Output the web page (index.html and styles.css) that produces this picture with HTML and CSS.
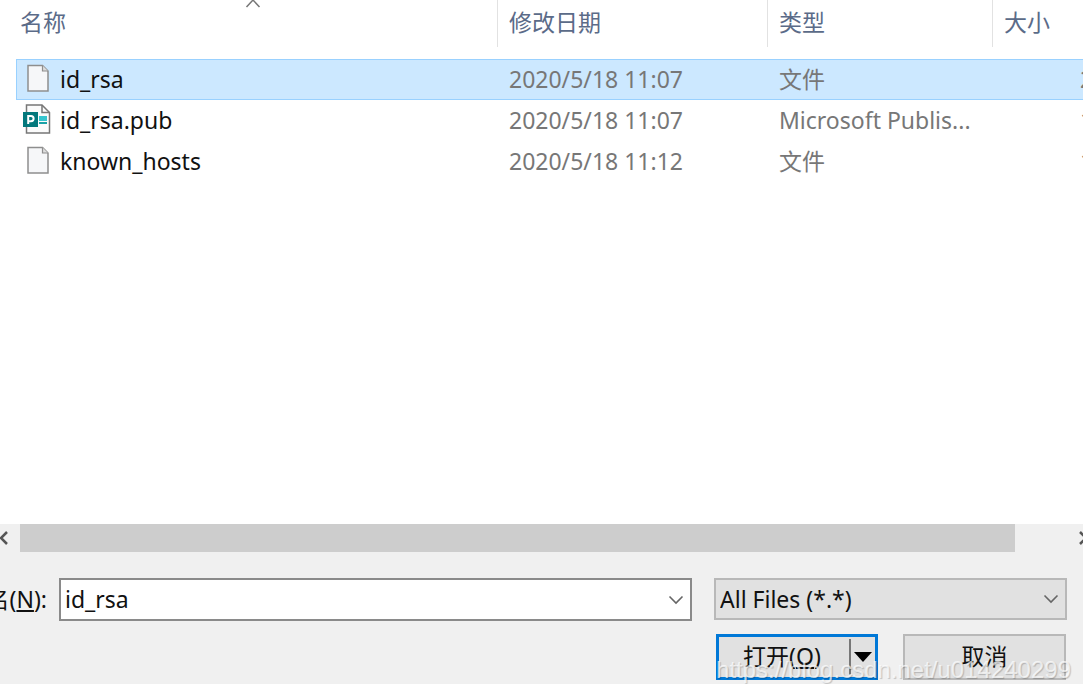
FILE: index.html
```html
<!DOCTYPE html>
<html lang="zh-CN">
<head>
    <meta charset="UTF-8">
    <meta name="viewport" content="width=device-width, initial-scale=1.0">
    <title>打开</title>
    <link rel="stylesheet" href="styles.css">
</head>
<body>
    <main class="files">
        <table class="file_table">
            <thead>
                <tr>
                    <th class="col_name">名称
                        <svg class="sort" width="16" height="9" viewBox="0 0 16 9"><path d="M1.5 8 L8 1 L14.5 8" fill="none" stroke="#777" stroke-width="1.5"/></svg>
                    </th>
                    <th class="col_date">修改日期</th>
                    <th class="col_type">类型</th>
                    <th class="col_size">大小</th>
                </tr>
            </thead>
            <tbody>
                <tr class="selected">
                    <td>
                        <div class="file_name">
                            <svg class="icon" width="30" height="32" viewBox="0 0 30 32">
                                <path d="M5 2.5 H19.5 L25 8 V28 H5 Z" fill="#f6f7f9" stroke="#8e8e8e" stroke-width="1.5"/>
                                <path d="M19.5 2.5 V8 H25" fill="#ddd" stroke="#8e8e8e" stroke-width="1.2"/>
                            </svg>
                            <span>id_rsa</span>
                        </div>
                    </td>
                    <td>2020/5/18 11:07</td>
                    <td>文件</td>
                    <td class="size">2 KB</td>
                </tr>
                <tr>
                    <td>
                        <div class="file_name">
                            <svg class="icon" width="30" height="32" viewBox="0 0 30 32">
                                <path d="M3.5 1 H19 L26.5 8.5 V29 H3.5 Z" fill="#fbfbfb" stroke="#777" stroke-width="1.5"/>
                                <path d="M19 1 V8.5 H26.5" fill="none" stroke="#777" stroke-width="1.5"/>
                                <rect x="16" y="12" width="8" height="5" fill="#36c5cf"/>
                                <rect x="16" y="18" width="8" height="2" fill="#1ba1a6"/>
                                <rect x="0" y="8" width="15" height="15" fill="#03787c"/>
                                <path d="M5.2 20 V12 H8 A2.6 2.6 0 0 1 8 17.2 H5.2" fill="none" stroke="#fff" stroke-width="2"/>
                            </svg>
                            <span>id_rsa.pub</span>
                        </div>
                    </td>
                    <td>2020/5/18 11:07</td>
                    <td>Microsoft Publis...</td>
                    <td class="size">1 KB</td>
                </tr>
                <tr>
                    <td>
                        <div class="file_name">
                            <svg class="icon" width="30" height="32" viewBox="0 0 30 32">
                                <path d="M5 2.5 H19.5 L25 8 V28 H5 Z" fill="#f6f7f9" stroke="#8e8e8e" stroke-width="1.5"/>
                                <path d="M19.5 2.5 V8 H25" fill="#ddd" stroke="#8e8e8e" stroke-width="1.2"/>
                            </svg>
                            <span>known_hosts</span>
                        </div>
                    </td>
                    <td>2020/5/18 11:12</td>
                    <td>文件</td>
                    <td class="size">1 KB</td>
                </tr>
            </tbody>
        </table>
    </main>

    <div class="scrollbar">
        <button class="scroll_btn" type="button" aria-label="向左滚动">
            <svg width="10" height="14" viewBox="0 0 10 14"><path d="M7 1 L1 7 L7 13" fill="none" stroke="#555" stroke-width="2.5"/></svg>
        </button>
        <div class="track"><div class="thumb"></div></div>
        <button class="scroll_btn right" type="button" aria-label="向右滚动">
            <svg width="10" height="14" viewBox="0 0 10 14"><path d="M2 1 L8 7 L2 13" fill="none" stroke="#555" stroke-width="2.5"/></svg>
        </button>
    </div>

    <form class="footer" onsubmit="return false">
        <div class="fields">
            <label class="name_label" for="fileName"><span>文件名(<u>N</u>):</span></label>
            <div class="combo">
                <input id="fileName" type="text" value="id_rsa" autocomplete="off">
                <button class="combo_btn" type="button" aria-label="以前的文件名">
                    <svg width="16" height="10" viewBox="0 0 16 10"><path d="M1.5 1.5 L8 8 L14.5 1.5" fill="none" stroke="#666" stroke-width="1.6"/></svg>
                </button>
            </div>
            <div class="filter">
                <select aria-label="文件类型">
                    <option>All Files (*.*)</option>
                </select>
                <svg width="16" height="10" viewBox="0 0 16 10"><path d="M1.5 1.5 L8 8 L14.5 1.5" fill="none" stroke="#666" stroke-width="1.6"/></svg>
            </div>
        </div>
        <div class="actions">
            <div class="split">
                <button class="open" type="submit">打开(<u>O</u>)</button>
                <button class="more" type="button" aria-label="打开方式">
                    <svg width="18" height="10" viewBox="0 0 18 10"><path d="M0 0 H18 L9 10 Z" fill="#000"/></svg>
                </button>
            </div>
            <button class="cancel" type="button">取消</button>
        </div>
        <div class="watermark">https://blog.csdn.net/u014240299</div>
    </form>
</body>
</html>
```

FILE: styles.css
```css
* {
    box-sizing: border-box;
    margin: 0;
    padding: 0;
}
body {
    display: flex;
    flex-direction: column;
    min-height: 100vh;
    overflow: hidden;
    background-color: #fff;
    color: #111;
    font-family: "Noto Sans", "Noto Sans CJK SC", sans-serif;
    font-size: 23px;
    line-height: 32px;
}
button, input, select {
    font: inherit;
    color: inherit;
    border: none;
    background: none;
}
u {
    text-decoration-thickness: 2px;
    text-underline-offset: 2px;
}

/* file list */
.files {
    flex: 1;
    padding-left: 16px;
    overflow: hidden;
}
.file_table {
    width: calc(100% + 60px);
    table-layout: fixed;
    border-collapse: separate;
    border-spacing: 0;
}
.file_table th {
    position: relative;
    height: 47px;
    padding-left: 11px;
    padding-bottom: 3px;
    border-right: 1px solid #e2e2e2;
    color: #5b6b88;
    font-weight: normal;
    text-align: left;
}
.file_table .col_name {
    padding-left: 4px;
}
.col_date {
    width: 270px;
}
.col_type {
    width: 225px;
}
.col_size {
    width: 150px;
}
.sort {
    position: absolute;
    top: -1px;
    left: 229px;
}
.file_table tbody::before {
    content: "";
    display: block;
    height: 12px;
}
.file_table td {
    height: 41px;
    padding-left: 11px;
    padding-bottom: 2px;
    border: 1px solid transparent;
    border-width: 1px 0;
    color: #777;
    white-space: nowrap;
}
.file_table td:first-child {
    border-left-width: 1px;
    padding-left: 6px;
    color: #111;
}
.file_table td.size {
    padding-left: 87px;
}
.selected td {
    background-color: #cce8ff;
    border-color: #99d1ff;
}
.file_name {
    display: flex;
    align-items: center;
    gap: 7px;
}
.icon {
    flex: none;
}

/* horizontal scrollbar */
.scrollbar {
    display: flex;
    height: 28px;
    overflow: hidden;
    background-color: #f0f0f0;
}
.scroll_btn {
    display: flex;
    align-items: center;
    width: 20px;
    flex: none;
}
.scroll_btn.right {
    width: 5px;
}
.scroll_btn svg {
    flex: none;
}
.track {
    flex: 1;
}
.thumb {
    width: 94%;
    height: 100%;
    background-color: #cdcdcd;
}

/* name, filter and buttons */
.footer {
    position: relative;
    padding: 26px 16px 4px 0;
    background-color: #f0f0f0;
}
.fields {
    display: flex;
    align-items: flex-start;
}
.name_label {
    display: flex;
    justify-content: flex-end;
    align-items: center;
    width: 47px;
    height: 42px;
    margin-right: 12px;
    overflow: hidden;
    white-space: nowrap;
}
.combo {
    display: flex;
    flex: 1;
    height: 43px;
    margin-right: 22px;
    border: 2px solid #8a8a8a;
    background-color: #fff;
}
.combo input {
    flex: 1;
    min-width: 0;
    padding-left: 4px;
    padding-bottom: 2px;
    outline: none;
}
.combo_btn {
    display: flex;
    align-items: center;
    justify-content: center;
    width: 28px;
}
.filter {
    display: grid;
    align-items: center;
    width: 353px;
    height: 42px;
    border: 2px solid #b8b8b8;
    background-color: #e1e1e1;
}
.filter select, .filter svg {
    grid-area: 1 / 1;
}
.filter select {
    height: 100%;
    padding-left: 4px;
    appearance: none;
}
.filter svg {
    justify-self: end;
    margin-right: 6px;
    pointer-events: none;
}
.actions {
    display: flex;
    justify-content: flex-end;
    gap: 25px;
    margin-top: 13px;
    padding-right: 1px;
}
.split {
    display: flex;
    align-items: stretch;
    width: 162px;
    height: 46px;
    border: 3px solid #0078d7;
    background-color: #e1e1e1;
}
.open {
    flex: 1;
    padding-right: 4px;
    padding-bottom: 2px;
}
.more {
    display: flex;
    align-items: center;
    justify-content: center;
    width: 26px;
    margin: 2px 0;
    border-left: 2px solid #777;
}
.cancel {
    width: 163px;
    height: 46px;
    padding-bottom: 2px;
    border: 2px solid #b8b8b8;
    background-color: #e1e1e1;
}
.watermark {
    position: absolute;
    right: 12px;
    bottom: 0;
    color: rgba(255, 255, 255, 0.7);
    font-size: 24px;
    line-height: 28px;
    font-family: "Liberation Sans", sans-serif;
    text-shadow: 1px 1px 1px rgba(0, 0, 0, 0.2);
    pointer-events: none;
}
```
